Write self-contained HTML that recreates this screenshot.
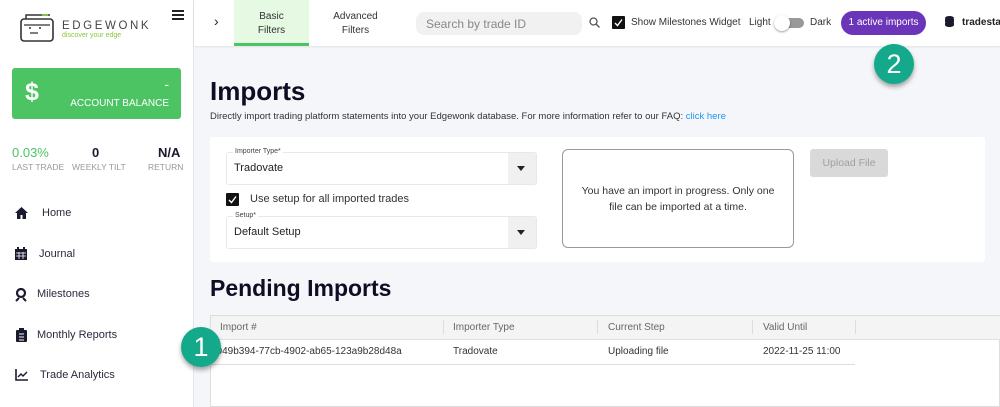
<!DOCTYPE html>
<html><head><meta charset="utf-8"><style>
*{box-sizing:border-box;margin:0;padding:0}
body{width:1000px;height:407px;overflow:hidden;background:#f5f6f9;font-family:"Liberation Sans",sans-serif;color:#1a1a2e;position:relative}
.a{position:absolute}
.sb{left:0;top:0;width:194px;height:407px;background:#fff;border-right:1px solid #e6e6e6}
.top{left:194px;top:0;width:806px;height:46px;background:#fff;box-shadow:0 1px 2px rgba(0,0,0,.08)}
.nav{font-size:11px;color:#2a2a3e}
.lbl{font-size:8.5px;color:#999}
.sel{background:#fff;border:1px solid #e8e8e8;border-radius:3px}
.th{font-size:10px;color:#666}
.td{font-size:10px;color:#333}
.badge{width:40px;height:40px;border-radius:50%;background:#14a98b;color:#fff;font-size:27px;text-align:center;line-height:40px;box-shadow:0 3px 5px rgba(0,0,0,.35)}
</style></head><body>
<div class="a sb">
  <svg class="a" style="left:20px;top:13px" width="36" height="30" viewBox="0 0 36 30"><path d="M6 6V2h24" fill="none" stroke="#333" stroke-width="1.5"/><path d="M22 2h6" stroke="#8cc63f" stroke-width="1.5"/><rect x="1" y="6" width="32" height="22" rx="3" fill="none" stroke="#333" stroke-width="1.6"/><path d="M4 12h26M10 20h8" stroke="#333" stroke-width="1.2"/><circle cx="10" cy="15" r="1" fill="#333"/><circle cx="20" cy="15" r="1" fill="#333"/></svg>
  <div class="a" style="left:62px;top:20px;font-size:11.5px;letter-spacing:2.6px;color:#444">EDGEWONK</div>
  <div class="a" style="left:62px;top:32px;font-size:7px;color:#8cc63f">discover your edge</div>
  <div class="a" style="left:172px;top:10px;width:12px;height:2px;background:#222;box-shadow:0 4px 0 #222,0 8px 0 #222"></div>
  <div class="a" style="left:12px;top:68px;width:169px;height:51px;background:#4cc463;border-radius:3px;color:#fff">
    <div class="a" style="left:13px;top:10px;font-size:25px;font-weight:bold">$</div>
    <div class="a" style="right:12px;top:8px;font-size:14px">-</div>
    <div class="a" style="right:12px;top:30px;font-size:10px">ACCOUNT BALANCE</div>
  </div>
  <div class="a" style="left:12px;top:145px;font-size:13px;color:#4cc463">0.03%</div>
  <div class="a lbl" style="left:12px;top:162px">LAST TRADE</div>
  <div class="a" style="left:92px;top:145px;font-size:13px;font-weight:bold">0</div>
  <div class="a lbl" style="left:72px;top:162px">WEEKLY TILT</div>
  <div class="a" style="left:158px;top:145px;font-size:13px;font-weight:bold">N/A</div>
  <div class="a lbl" style="left:148px;top:162px">RETURN</div>
  <svg class="a" style="left:15px;top:207px" width="13" height="12" viewBox="0 0 13 12"><path d="M6.5 0L0 6h2v6h3.5V8h2v4H11V6h2z" fill="#1a1a2e"/></svg>
  <div class="a nav" style="left:42px;top:207px">Home</div>
  <svg class="a" style="left:15px;top:247px" width="12" height="13" viewBox="0 0 12 13"><rect x="0" y="2" width="12" height="11" fill="#1a1a2e"/><rect x="2" y="0" width="2" height="3" fill="#1a1a2e"/><rect x="8" y="0" width="2" height="3" fill="#1a1a2e"/><path d="M1 6h10M1 9h10M4 5v7M8 5v7" stroke="#fff" stroke-width=".8"/></svg>
  <div class="a nav" style="left:39px;top:248px">Journal</div>
  <svg class="a" style="left:15px;top:288px" width="12" height="14" viewBox="0 0 12 14"><circle cx="6" cy="5" r="4" fill="none" stroke="#1a1a2e" stroke-width="2.2"/><path d="M1 13l3-3M11 13l-3-3" stroke="#1a1a2e" stroke-width="2"/></svg>
  <div class="a nav" style="left:37px;top:288px">Milestones</div>
  <svg class="a" style="left:16px;top:328px" width="11" height="14" viewBox="0 0 11 14"><rect x="0" y="2" width="11" height="12" rx="1" fill="#1a1a2e"/><rect x="3" y="0" width="5" height="3" fill="#1a1a2e"/><path d="M3 6h5M3 9h5M3 12h5" stroke="#fff" stroke-width="1"/></svg>
  <div class="a nav" style="left:37px;top:329px">Monthly Reports</div>
  <svg class="a" style="left:15px;top:369px" width="13" height="12" viewBox="0 0 13 12"><path d="M1 0v11h12" fill="none" stroke="#1a1a2e" stroke-width="1.6"/><path d="M3 8l3-3 2 2 4-4" fill="none" stroke="#1a1a2e" stroke-width="1.4"/></svg>
  <div class="a nav" style="left:40px;top:369px">Trade Analytics</div>
</div>
<div class="a top">
  <div class="a" style="left:20px;top:13px;font-size:14px;color:#222">›</div>
  <div class="a" style="left:40px;top:0;width:75px;height:46px;background:#e5f9e3;border-bottom:3px solid #4cc463;font-size:10px;text-align:center;padding-top:10px;line-height:14px;color:#333">Basic<br>Filters</div>
  <div class="a" style="left:124px;top:10px;width:75px;font-size:10px;text-align:center;line-height:14px;color:#333">Advanced<br>Filters</div>
  <div class="a" style="left:222px;top:12px;width:166px;height:23px;background:#f1f1f1;border-radius:8px;font-size:12px;color:#888;padding:5px 10px">Search by trade ID</div>
  <svg class="a" style="left:395px;top:17px" width="11" height="11" viewBox="0 0 11 11"><circle cx="4.5" cy="4.5" r="3.5" fill="none" stroke="#555" stroke-width="1.3"/><path d="M7 7l3.5 3.5" stroke="#555" stroke-width="1.3"/></svg>
  <div class="a" style="left:418px;top:16px;width:13px;height:13px;background:#111;border-radius:1px"></div>
  <svg class="a" style="left:420px;top:18px" width="9" height="9" viewBox="0 0 9 9"><path d="M1 5l2.5 2.5L8 1.5" fill="none" stroke="#fff" stroke-width="1.4"/></svg>
  <div class="a" style="left:437px;top:17px;font-size:10px;color:#333">Show Milestones Widget</div>
  <div class="a" style="left:555px;top:17px;font-size:10px;color:#333">Light</div>
  <div class="a" style="left:584px;top:18px;width:26px;height:10px;background:#999;border-radius:5px"></div>
  <div class="a" style="left:580px;top:15px;width:16px;height:16px;background:#fff;border-radius:50%;box-shadow:0 1px 2px rgba(0,0,0,.4)"></div>
  <div class="a" style="left:616px;top:17px;font-size:10px;color:#333">Dark</div>
  <div class="a" style="left:647px;top:11px;width:85px;height:24px;background:#6a35b8;border-radius:12px;color:#fff;font-size:10px;text-align:center;line-height:24px">1 active imports</div>
  <svg class="a" style="left:751px;top:16px" width="9" height="12" viewBox="0 0 9 12"><ellipse cx="4.5" cy="2" rx="4.5" ry="2" fill="#1a1a2e"/><path d="M0 3v2.5c0 1 2 2 4.5 2S9 6.5 9 5.5V3M0 6.5V9c0 1 2 2 4.5 2S9 10 9 9V6.5" fill="#1a1a2e"/></svg>
  <div class="a" style="left:768px;top:17px;font-size:10px;font-weight:bold;color:#222">tradestat</div>
</div>
<div class="a badge" style="left:874px;top:44px">2</div>
<div class="a" style="left:210px;top:76px;font-size:26px;font-weight:bold;color:#0d0d24">Imports</div>
<div class="a" style="left:210px;top:111px;font-size:9.5px;color:#333">Directly import trading platform statements into your Edgewonk database. For more information refer to our FAQ: <span style="color:#2196f3">click here</span></div>
<div class="a" style="left:210px;top:137px;width:775px;height:125px;background:#fff;border-radius:3px"></div>
<div class="a sel" style="left:226px;top:152px;width:311px;height:33px"></div>
<div class="a" style="left:508px;top:153px;width:28px;height:31px;background:#f0f0f0"></div>
<div class="a" style="left:517px;top:166px;border:4px solid transparent;border-top:5px solid #222"></div>
<div class="a" style="left:233px;top:148px;font-size:7px;color:#444;background:#fff;padding:0 2px">Importer Type*</div>
<div class="a" style="left:234px;top:162px;font-size:11px;color:#222">Tradovate</div>
<div class="a" style="left:226px;top:193px;width:13px;height:13px;background:#111;border-radius:1px"></div>
<svg class="a" style="left:228px;top:195px" width="9" height="9" viewBox="0 0 9 9"><path d="M1 5l2.5 2.5L8 1.5" fill="none" stroke="#fff" stroke-width="1.4"/></svg>
<div class="a" style="left:250px;top:193px;font-size:11px;color:#333">Use setup for all imported trades</div>
<div class="a sel" style="left:226px;top:216px;width:311px;height:33px"></div>
<div class="a" style="left:508px;top:217px;width:28px;height:31px;background:#f0f0f0"></div>
<div class="a" style="left:517px;top:230px;border:4px solid transparent;border-top:5px solid #222"></div>
<div class="a" style="left:233px;top:212px;font-size:7px;color:#444;background:#fff;padding:0 2px">Setup*</div>
<div class="a" style="left:234px;top:226px;font-size:11px;color:#222">Default Setup</div>
<div class="a" style="left:562px;top:149px;width:232px;height:99px;border:1.5px solid #999;border-radius:6px;font-size:10.5px;color:#333;text-align:center;padding-top:33px;line-height:16px">You have an import in progress. Only one<br>file can be imported at a time.</div>
<div class="a" style="left:810px;top:149px;width:78px;height:28px;background:#d9d9d9;border-radius:3px;color:#a0a0a0;font-size:10.5px;text-align:center;line-height:28px">Upload File</div>
<div class="a" style="left:210px;top:275px;font-size:23px;font-weight:bold;color:#0d0d24">Pending Imports</div>
<div class="a" style="left:210px;top:315px;width:790px;height:92px;background:#fff;border:1px solid #ddd"></div>
<div class="a" style="left:211px;top:316px;width:789px;height:24px;background:#f4f4f4;border-bottom:1px solid #e0e0e0"></div>
<div class="a" style="left:443px;top:320px;width:1px;height:14px;background:#ddd"></div>
<div class="a" style="left:597px;top:320px;width:1px;height:14px;background:#ddd"></div>
<div class="a" style="left:752px;top:320px;width:1px;height:14px;background:#ddd"></div>
<div class="a" style="left:855px;top:320px;width:1px;height:14px;background:#ddd"></div>
<div class="a th" style="left:220px;top:322px">Import #</div>
<div class="a th" style="left:453px;top:322px">Importer Type</div>
<div class="a th" style="left:608px;top:322px">Current Step</div>
<div class="a th" style="left:763px;top:322px">Valid Until</div>
<div class="a" style="left:211px;top:364px;width:644px;height:1px;background:#ddd"></div>
<div class="a td" style="left:211px;top:346px">b049b394-77cb-4902-ab65-123a9b28d48a</div>
<div class="a td" style="left:453px;top:346px">Tradovate</div>
<div class="a td" style="left:608px;top:346px">Uploading file</div>
<div class="a td" style="left:763px;top:346px">2022-11-25 11:00</div>
<div class="a badge" style="left:181px;top:327px">1</div>
</body></html>
